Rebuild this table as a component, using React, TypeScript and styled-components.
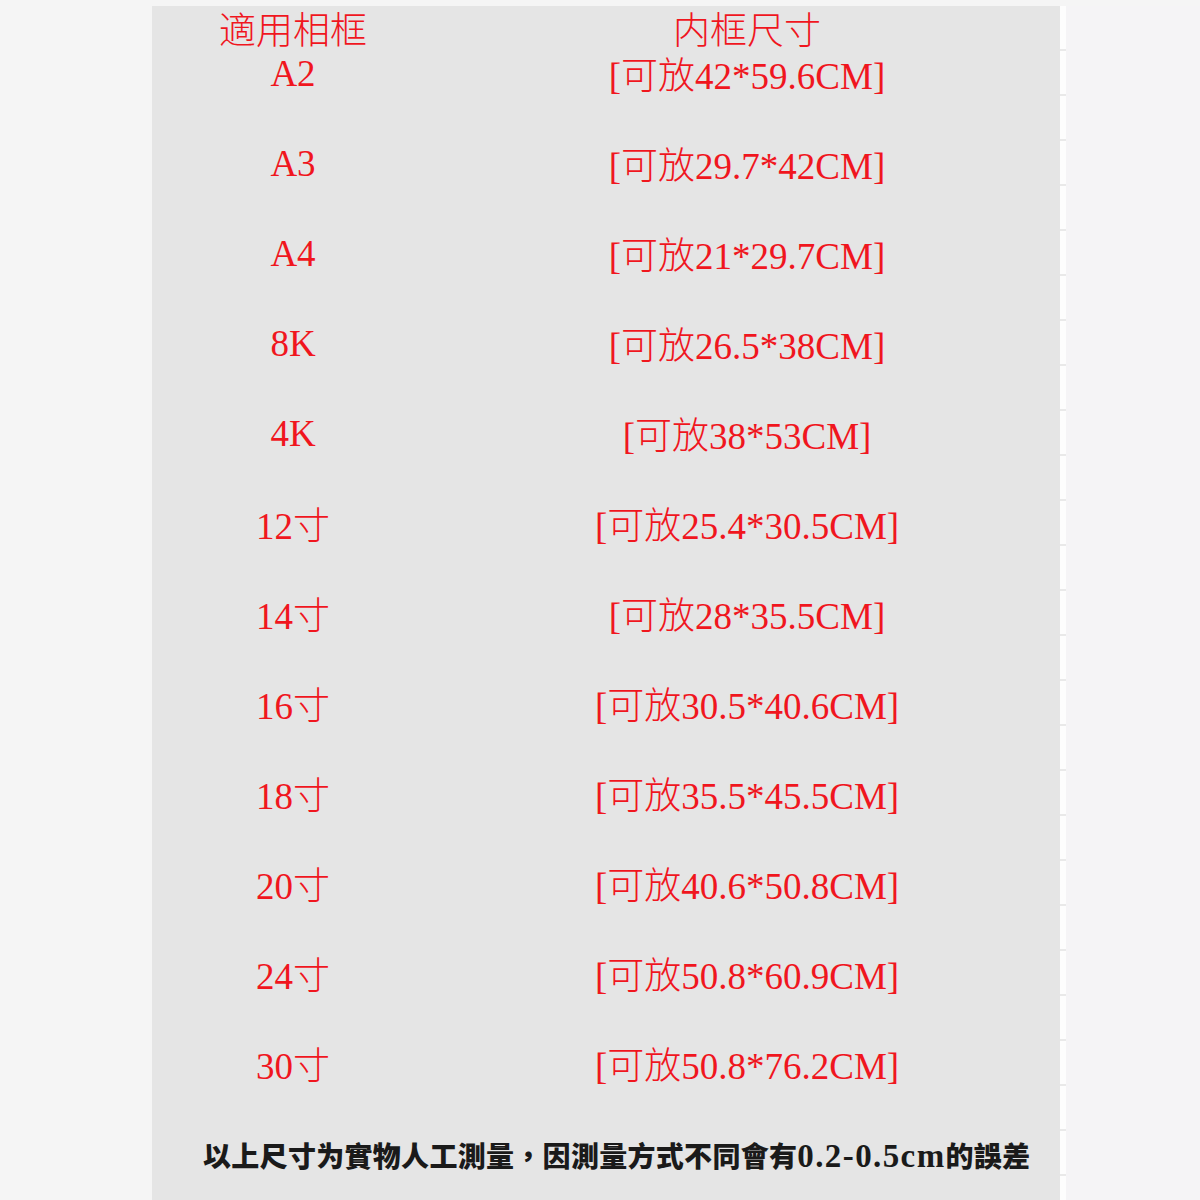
import React from "react";
import styled, { createGlobalStyle } from "styled-components";

const Global = createGlobalStyle`
  html, body { margin: 0; padding: 0; background: #f5f5f5; }
  body { width: 1200px; height: 1200px; overflow: hidden; }
`;

const Page = styled.div`
  display: flex;
  height: 1200px;
  padding: 6px 0 0 152px;
  box-sizing: border-box;
  background: #f5f5f5;
`;

const Panel = styled.div`
  width: 908px;
  flex: none;
  background: #e5e5e5;
  display: flex;
  flex-direction: column;
`;

const Strip = styled.div`
  width: 6px;
  flex: none;
  background: repeating-linear-gradient(
    to bottom,
    #fdfdfd 0px,
    #fdfdfd 43px,
    #e9e9e9 43px,
    #e9e9e9 45px
  );
`;

const Rest = styled.div`
  flex: 1;
  background: #f5f4f6;
`;

const Row = styled.div<{ $h: number }>`
  display: grid;
  grid-template-columns: 282px 1fr;
  height: ${(p) => p.$h}px;
  align-items: start;
`;

const Cell = styled.div`
  text-align: center;
  color: #f0161e;
  font-size: 37px;
  line-height: 45px;
  white-space: nowrap;
`;

const Cjk = styled.span`
  font-family: "Noto Sans CJK SC", sans-serif;
  font-weight: 300;
`;

const Latin = styled.span`
  font-family: "Liberation Serif", serif;
  font-size: 37px;
`;

const Footer = styled.div`
  padding-left: 51px;
  font-family: "Noto Sans CJK TC", sans-serif;
  font-weight: 900;
  font-size: 28px;
  line-height: 48px;
  letter-spacing: 0.3px;
  color: #1a1a1a;
  white-space: nowrap;
`;

const FooterLatin = styled.span`
  font-family: "Liberation Serif", serif;
  font-weight: 700;
  font-size: 33px;
  letter-spacing: 1.4px;
`;

const Mixed: React.FC<{ text: string }> = ({ text }) => {
  const parts = text.split(/([\u3000-\u9fff\uff00-\uffef]+)/).filter(Boolean);
  return (
    <>
      {parts.map((p, i) =>
        /[\u3000-\u9fff\uff00-\uffef]/.test(p) ? (
          <Cjk key={i}>{p}</Cjk>
        ) : (
          <Latin key={i}>{p}</Latin>
        )
      )}
    </>
  );
};

const rows: [string, string][] = [
  ["A2", "42*59.6"],
  ["A3", "29.7*42"],
  ["A4", "21*29.7"],
  ["8K", "26.5*38"],
  ["4K", "38*53"],
  ["12寸", "25.4*30.5"],
  ["14寸", "28*35.5"],
  ["16寸", "30.5*40.6"],
  ["18寸", "35.5*45.5"],
  ["20寸", "40.6*50.8"],
  ["24寸", "50.8*60.9"],
  ["30寸", "50.8*76.2"],
];

export default function App() {
  return (
    <>
      <Global />
      <Page>
        <Panel>
          <Row $h={45}>
            <Cell>
              <Cjk>適用相框</Cjk>
            </Cell>
            <Cell>
              <Cjk>内框尺寸</Cjk>
            </Cell>
          </Row>
          {rows.map(([a, b]) => (
            <Row $h={90} key={a}>
              <Cell>
                <Mixed text={a} />
              </Cell>
              <Cell>
                <Mixed text={`[可放${b}CM]`} />
              </Cell>
            </Row>
          ))}
          <Footer>
            以上尺寸为實物人工測量，因測量方式不同會有
            <FooterLatin>0.2-0.5cm</FooterLatin>的誤差
          </Footer>
        </Panel>
        <Strip />
        <Rest />
      </Page>
    </>
  );
}
